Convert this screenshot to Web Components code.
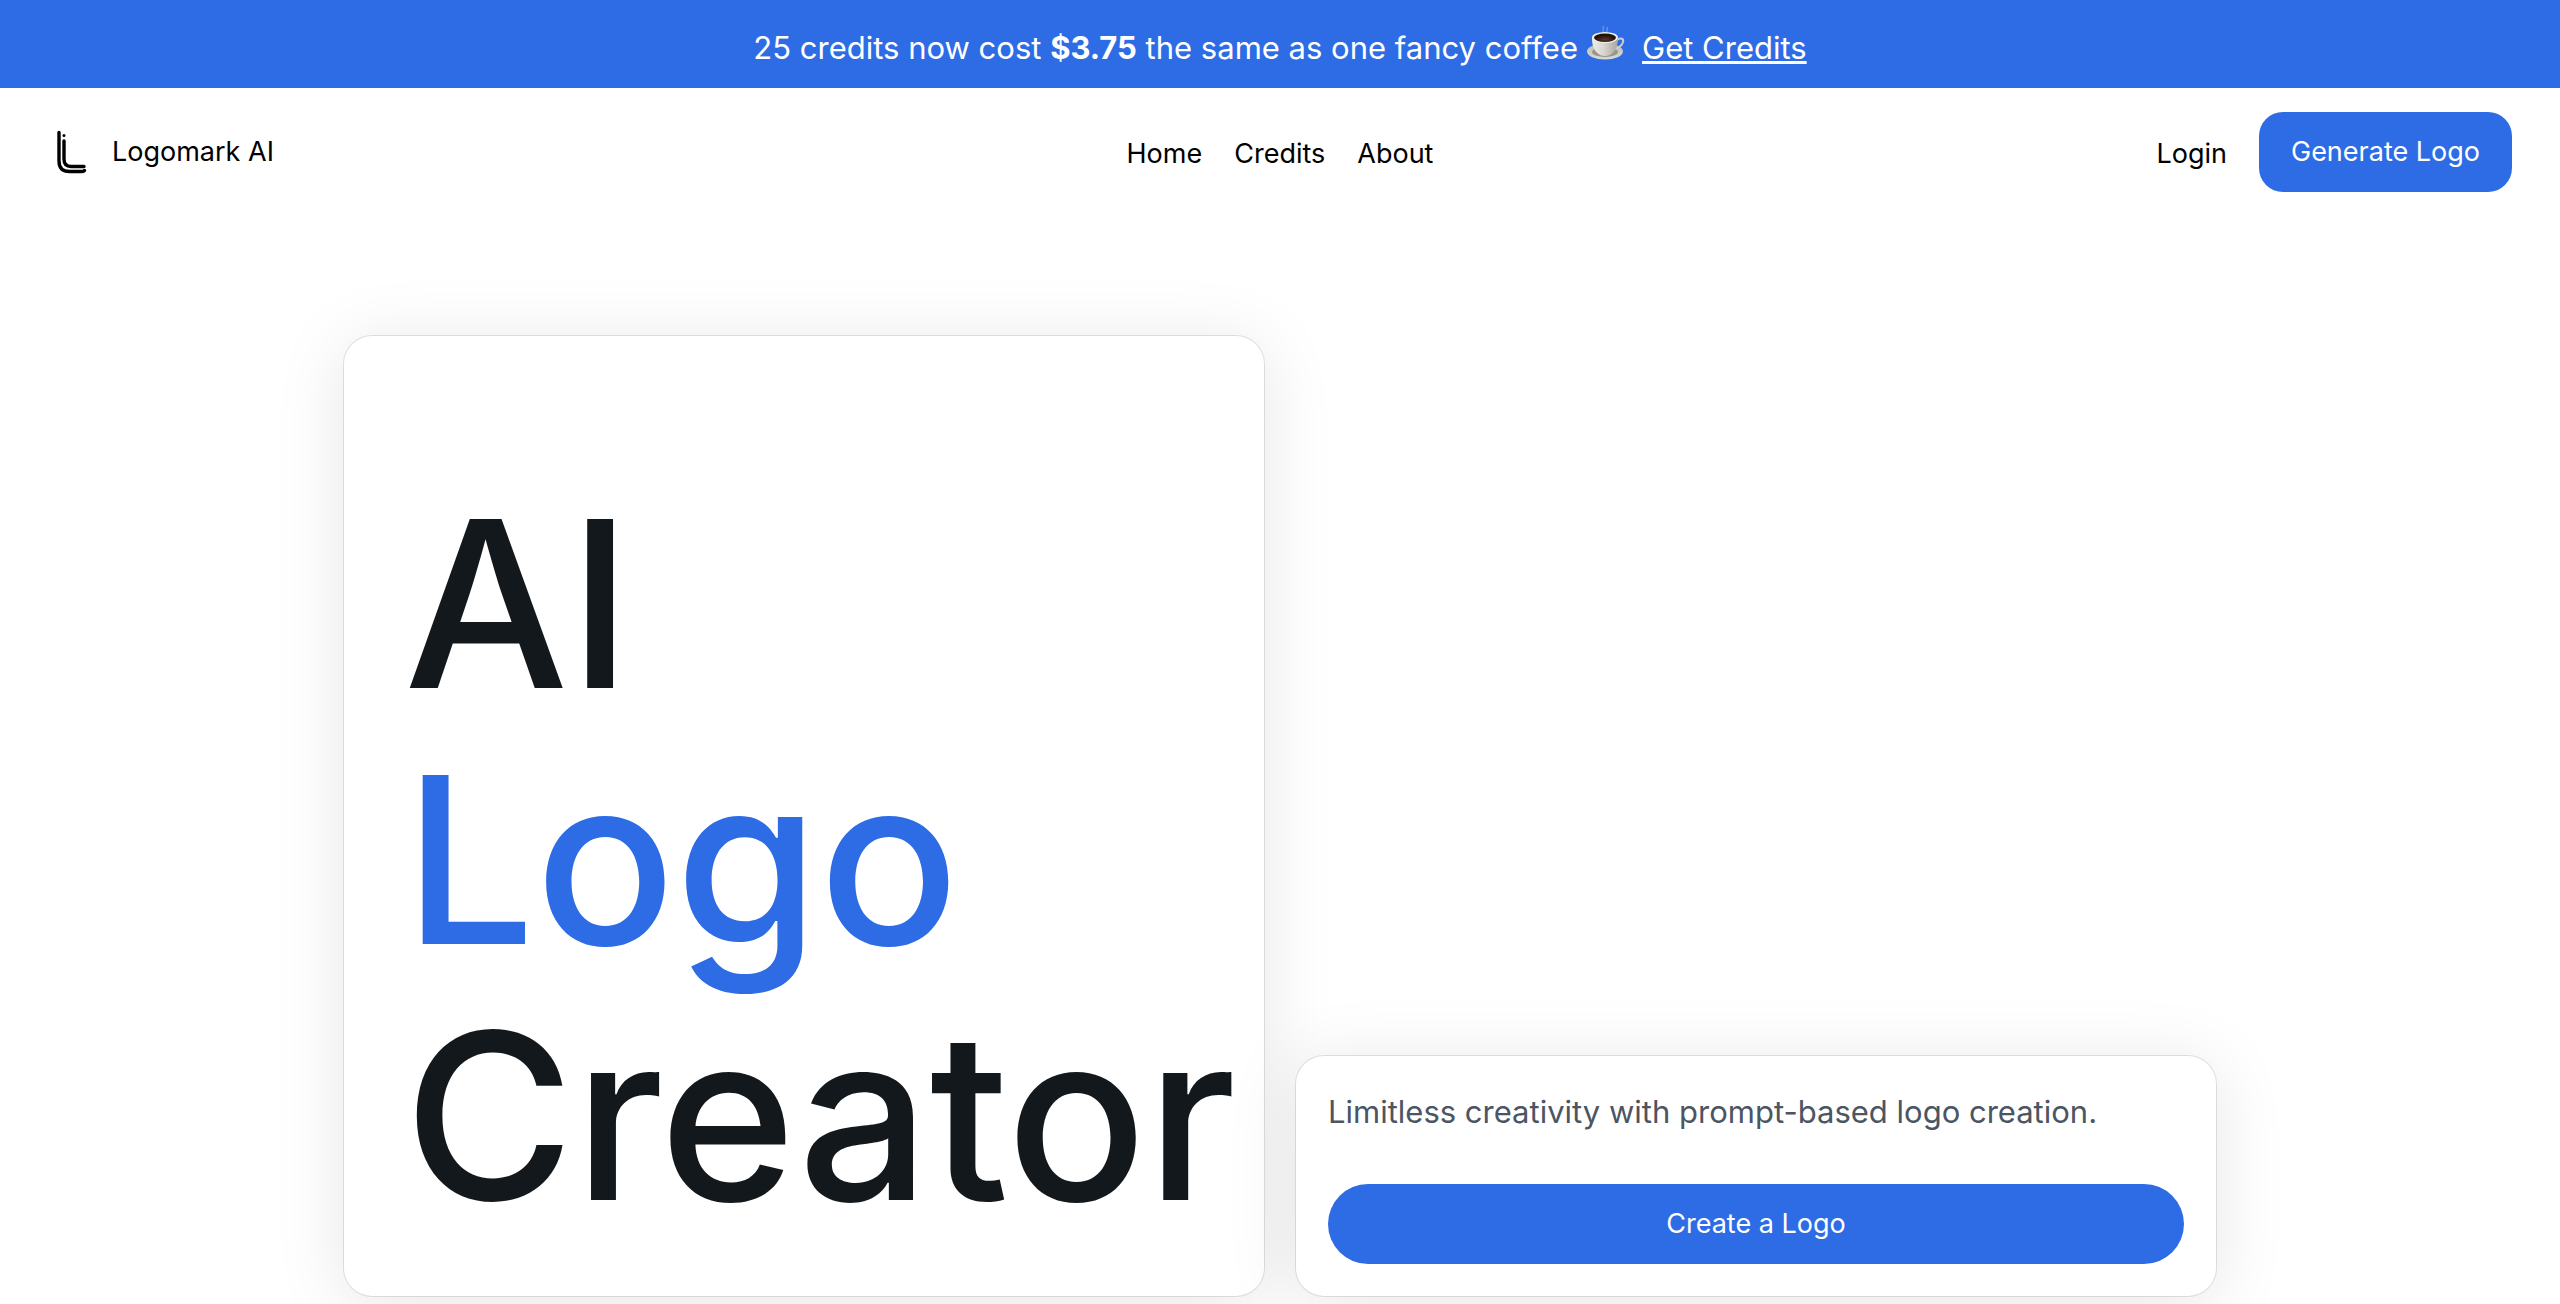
<!DOCTYPE html>
<html lang="en">
<head>
<meta charset="utf-8">
<meta name="viewport" content="width=device-width, initial-scale=1">
<title>Logomark AI</title>
<style>
  :root { --brand: #2e6ce6; --ink: #12181b; --muted: #4b5563; }
  body { margin: 0; background: #fff; color: #000; font-family: Inter, "Liberation Sans", sans-serif; font-size: 27px; line-height: 40px; }
</style>
</head>
<body>
<promo-banner></promo-banner>
<site-header></site-header>
<hero-section></hero-section>
<script>
const define = (name, html) => {
  const template = document.createElement('template');
  template.innerHTML = html;
  customElements.define(name, class extends HTMLElement {
    constructor() {
      super();
      this.attachShadow({ mode: 'open' }).append(template.content.cloneNode(true));
    }
  });
};

define('coffee-icon', `
  <style>:host { display: inline-block; width: 40px; height: 36px; } svg { display: block; width: 100%; height: 100%; overflow: visible; }</style>
  <svg viewBox="0 3 40 36" role="img" aria-label="Coffee">
    <defs>
      <linearGradient id="cup" x1="0" x2="1"><stop offset="0" stop-color="#efede7"/><stop offset=".45" stop-color="#d9d6cf"/><stop offset="1" stop-color="#a9a69f"/></linearGradient>
      <linearGradient id="dish" x1="0" x2="0" y1="0" y2="1"><stop offset="0" stop-color="#bdbab4"/><stop offset="1" stop-color="#dcdad5"/></linearGradient>
      <radialGradient id="brew" cy=".7"><stop offset="0" stop-color="#57382a"/><stop offset="1" stop-color="#21120d"/></radialGradient>
    </defs>
    <path d="M18 8c-3-3 1-4-1-7M20 8c3-3-1-3 2-6" fill="none" stroke="#c8d6f2" stroke-width="1.5" opacity=".35"/>
    <ellipse cx="19" cy="26.500" rx="18" ry="8" fill="url(#dish)"/>
    <ellipse cx="19" cy="27" rx="13" ry="5" fill="#98958f"/>
    <path d="M31 15c4-3 7-1 6 2-1 4-5 6-9 7" fill="none" stroke="#c9cdd4" stroke-width="2"/>
    <path d="M6 13c0 9 3 14 8 17q5 2 10 0c5-3 8-8 8-17z" fill="url(#cup)"/>
    <ellipse cx="19" cy="12.500" rx="13" ry="5.500" fill="#f0eee9"/>
    <ellipse cx="19" cy="12.800" rx="11" ry="4.200" fill="url(#brew)"/>
  </svg>`);

define('promo-banner', `
  <style>
    :host { display: block; background: var(--brand); color: #fff; padding: 28px 32px 20px; font-size: 31px; line-height: 40px; text-align: center; }
    p { margin: 0; display: flex; justify-content: center; gap: 8px; }
    coffee-icon { margin-right: 8px; }
    strong { font-weight: 700; }
    a { color: inherit; text-decoration: underline; text-underline-offset: 2px; text-decoration-thickness: 3px; text-decoration-skip-ink: none; }
  </style>
  <p><span>25 credits now cost <strong>$3.75</strong> the same as one fancy coffee</span><coffee-icon></coffee-icon><a href="#credits">Get Credits</a></p>`);

define('logo-mark', `
  <style>:host { display: block; width: 32px; height: 44px; } svg { display: block; width: 100%; height: 100%; }</style>
  <svg viewBox="0 0 32 44" fill="none" stroke="#000" stroke-width="3.400" stroke-linecap="round" aria-hidden="true">
    <path d="M3 2.500V31q0 10.500 10.500 10.500h12q2 0 3-1"/>
    <path d="M8 11v18q0 7.500 7 7.500h13"/>
    <circle cx="8" cy="5.500" r="1.500" fill="#000" stroke="none"/>
  </svg>`);

define('action-button', `
  <style>
    :host { display: block; }
    button { display: block; width: 100%; border: 0; margin: 0; padding: 20px 32px; border-radius: var(--button-radius, 24px); background: var(--brand); color: #fff; font: inherit; cursor: pointer; }
  </style>
  <button type="button"><slot></slot></button>`);

define('site-header', `
  <style>
    :host { display: block; padding: 24px 48px; }
    header { display: grid; grid-template-columns: 1fr auto 1fr; align-items: center; }
    a { color: inherit; text-decoration: none; }
    .brand { display: flex; align-items: center; gap: 24px; padding-left: 8px; }
    nav { display: flex; gap: 32px; padding-top: 4px; }
    .actions { display: flex; align-items: center; justify-content: flex-end; gap: 32px; }
    .login { padding-top: 4px; }
  </style>
  <header>
    <a class="brand" href="#home"><logo-mark></logo-mark><span>Logomark AI</span></a>
    <nav aria-label="Main"><a href="#home">Home</a><a href="#credits">Credits</a><a href="#about">About</a></nav>
    <div class="actions"><a class="login" href="#login">Login</a><action-button>Generate Logo</action-button></div>
  </header>`);

define('surface-card', `
  <style>
    :host { display: block; box-sizing: border-box; background: #fff; border-radius: 28px; box-shadow: 0 0 0 1px rgba(0,0,0,.1), 0 8px 72px rgba(0,0,0,.1); }
  </style>
  <slot></slot>`);

define('hero-section', `
  <style>
    :host { display: block; box-sizing: border-box; max-width: 2000px; margin: 0 auto; padding: 120px 64px 64px; }
    main { display: grid; grid-template-columns: repeat(2, minmax(0, 1fr)); gap: 32px; align-items: end; }
    .title { padding: 140px 24px 52px 60px; }
    h1 { margin: 0; color: var(--ink); font-size: 232px; line-height: 256px; font-weight: 500; }
    h1 span { display: block; }
    .accent { color: var(--brand); }
    .pitch { padding: 32px; }
    p { margin: 0 0 48px; color: var(--muted); font-size: 31px; line-height: 48px; }
    action-button { --button-radius: 40px; }
  </style>
  <main>
    <surface-card class="title"><h1><span>AI</span><span class="accent">Logo</span><span>Creator</span></h1></surface-card>
    <surface-card class="pitch"><p>Limitless creativity with prompt-based logo creation.</p><action-button>Create a Logo</action-button></surface-card>
  </main>`);
</script>
</body>
</html>
